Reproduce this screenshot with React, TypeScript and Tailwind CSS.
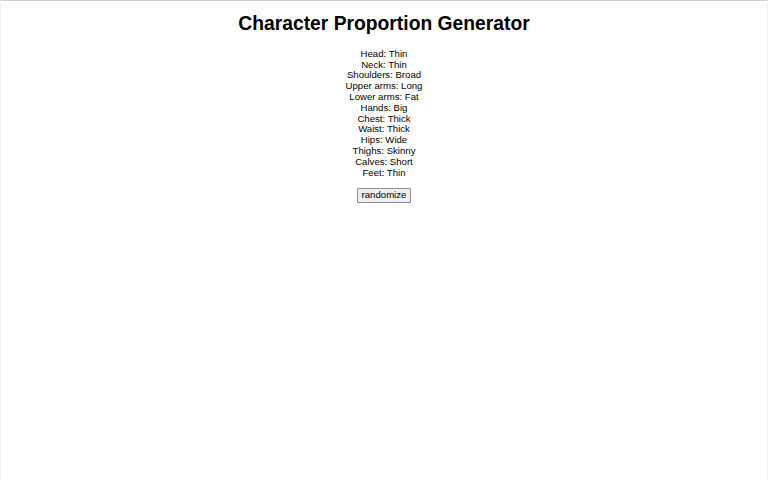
import React, { useState } from "react";

const parts = [
  "Head",
  "Neck",
  "Shoulders",
  "Upper arms",
  "Lower arms",
  "Hands",
  "Chest",
  "Waist",
  "Hips",
  "Thighs",
  "Calves",
  "Feet",
];

const options: Record<string, string[]> = {
  Head: ["Thin", "Round", "Big", "Small"],
  Neck: ["Thin", "Thick", "Long", "Short"],
  Shoulders: ["Broad", "Narrow", "Sloped"],
  "Upper arms": ["Long", "Short", "Fat", "Thin"],
  "Lower arms": ["Fat", "Thin", "Long", "Short"],
  Hands: ["Big", "Small", "Long"],
  Chest: ["Thick", "Flat", "Broad"],
  Waist: ["Thick", "Thin", "Wide"],
  Hips: ["Wide", "Narrow"],
  Thighs: ["Skinny", "Thick", "Long"],
  Calves: ["Short", "Long", "Thick"],
  Feet: ["Thin", "Big", "Small"],
};

const initial: Record<string, string> = {
  Head: "Thin",
  Neck: "Thin",
  Shoulders: "Broad",
  "Upper arms": "Long",
  "Lower arms": "Fat",
  Hands: "Big",
  Chest: "Thick",
  Waist: "Thick",
  Hips: "Wide",
  Thighs: "Skinny",
  Calves: "Short",
  Feet: "Thin",
};

export default function App() {
  const [traits, setTraits] = useState(initial);

  const randomize = () => {
    const next: Record<string, string> = {};
    parts.forEach((p) => {
      const list = options[p];
      next[p] = list[Math.floor(Math.random() * list.length)];
    });
    setTraits(next);
  };

  return (
    <div className="min-h-[480px] bg-white border-t border-t-[#cfcfcf] border-x border-x-[#f0f0f0] text-black font-['Liberation_Sans',Arial,sans-serif] text-center">
      <h1 className="mt-[12px] mb-[13.8px] text-[19.3px] leading-[22px] font-bold">
        Character Proportion Generator
      </h1>
      <div className="text-[9.6px] leading-[10.8px]">
        {parts.map((p) => (
          <div key={p}>
            {p}: {traits[p]}
          </div>
        ))}
      </div>
      <div className="mt-[10px] flex justify-center">
        <button
          onClick={randomize}
          className="bg-[#efefef] border border-[#8f8f8f] rounded-[1px] px-[4px] py-[1px] text-[9.6px] leading-[10.8px]"
        >
          randomize
        </button>
      </div>
    </div>
  );
}
